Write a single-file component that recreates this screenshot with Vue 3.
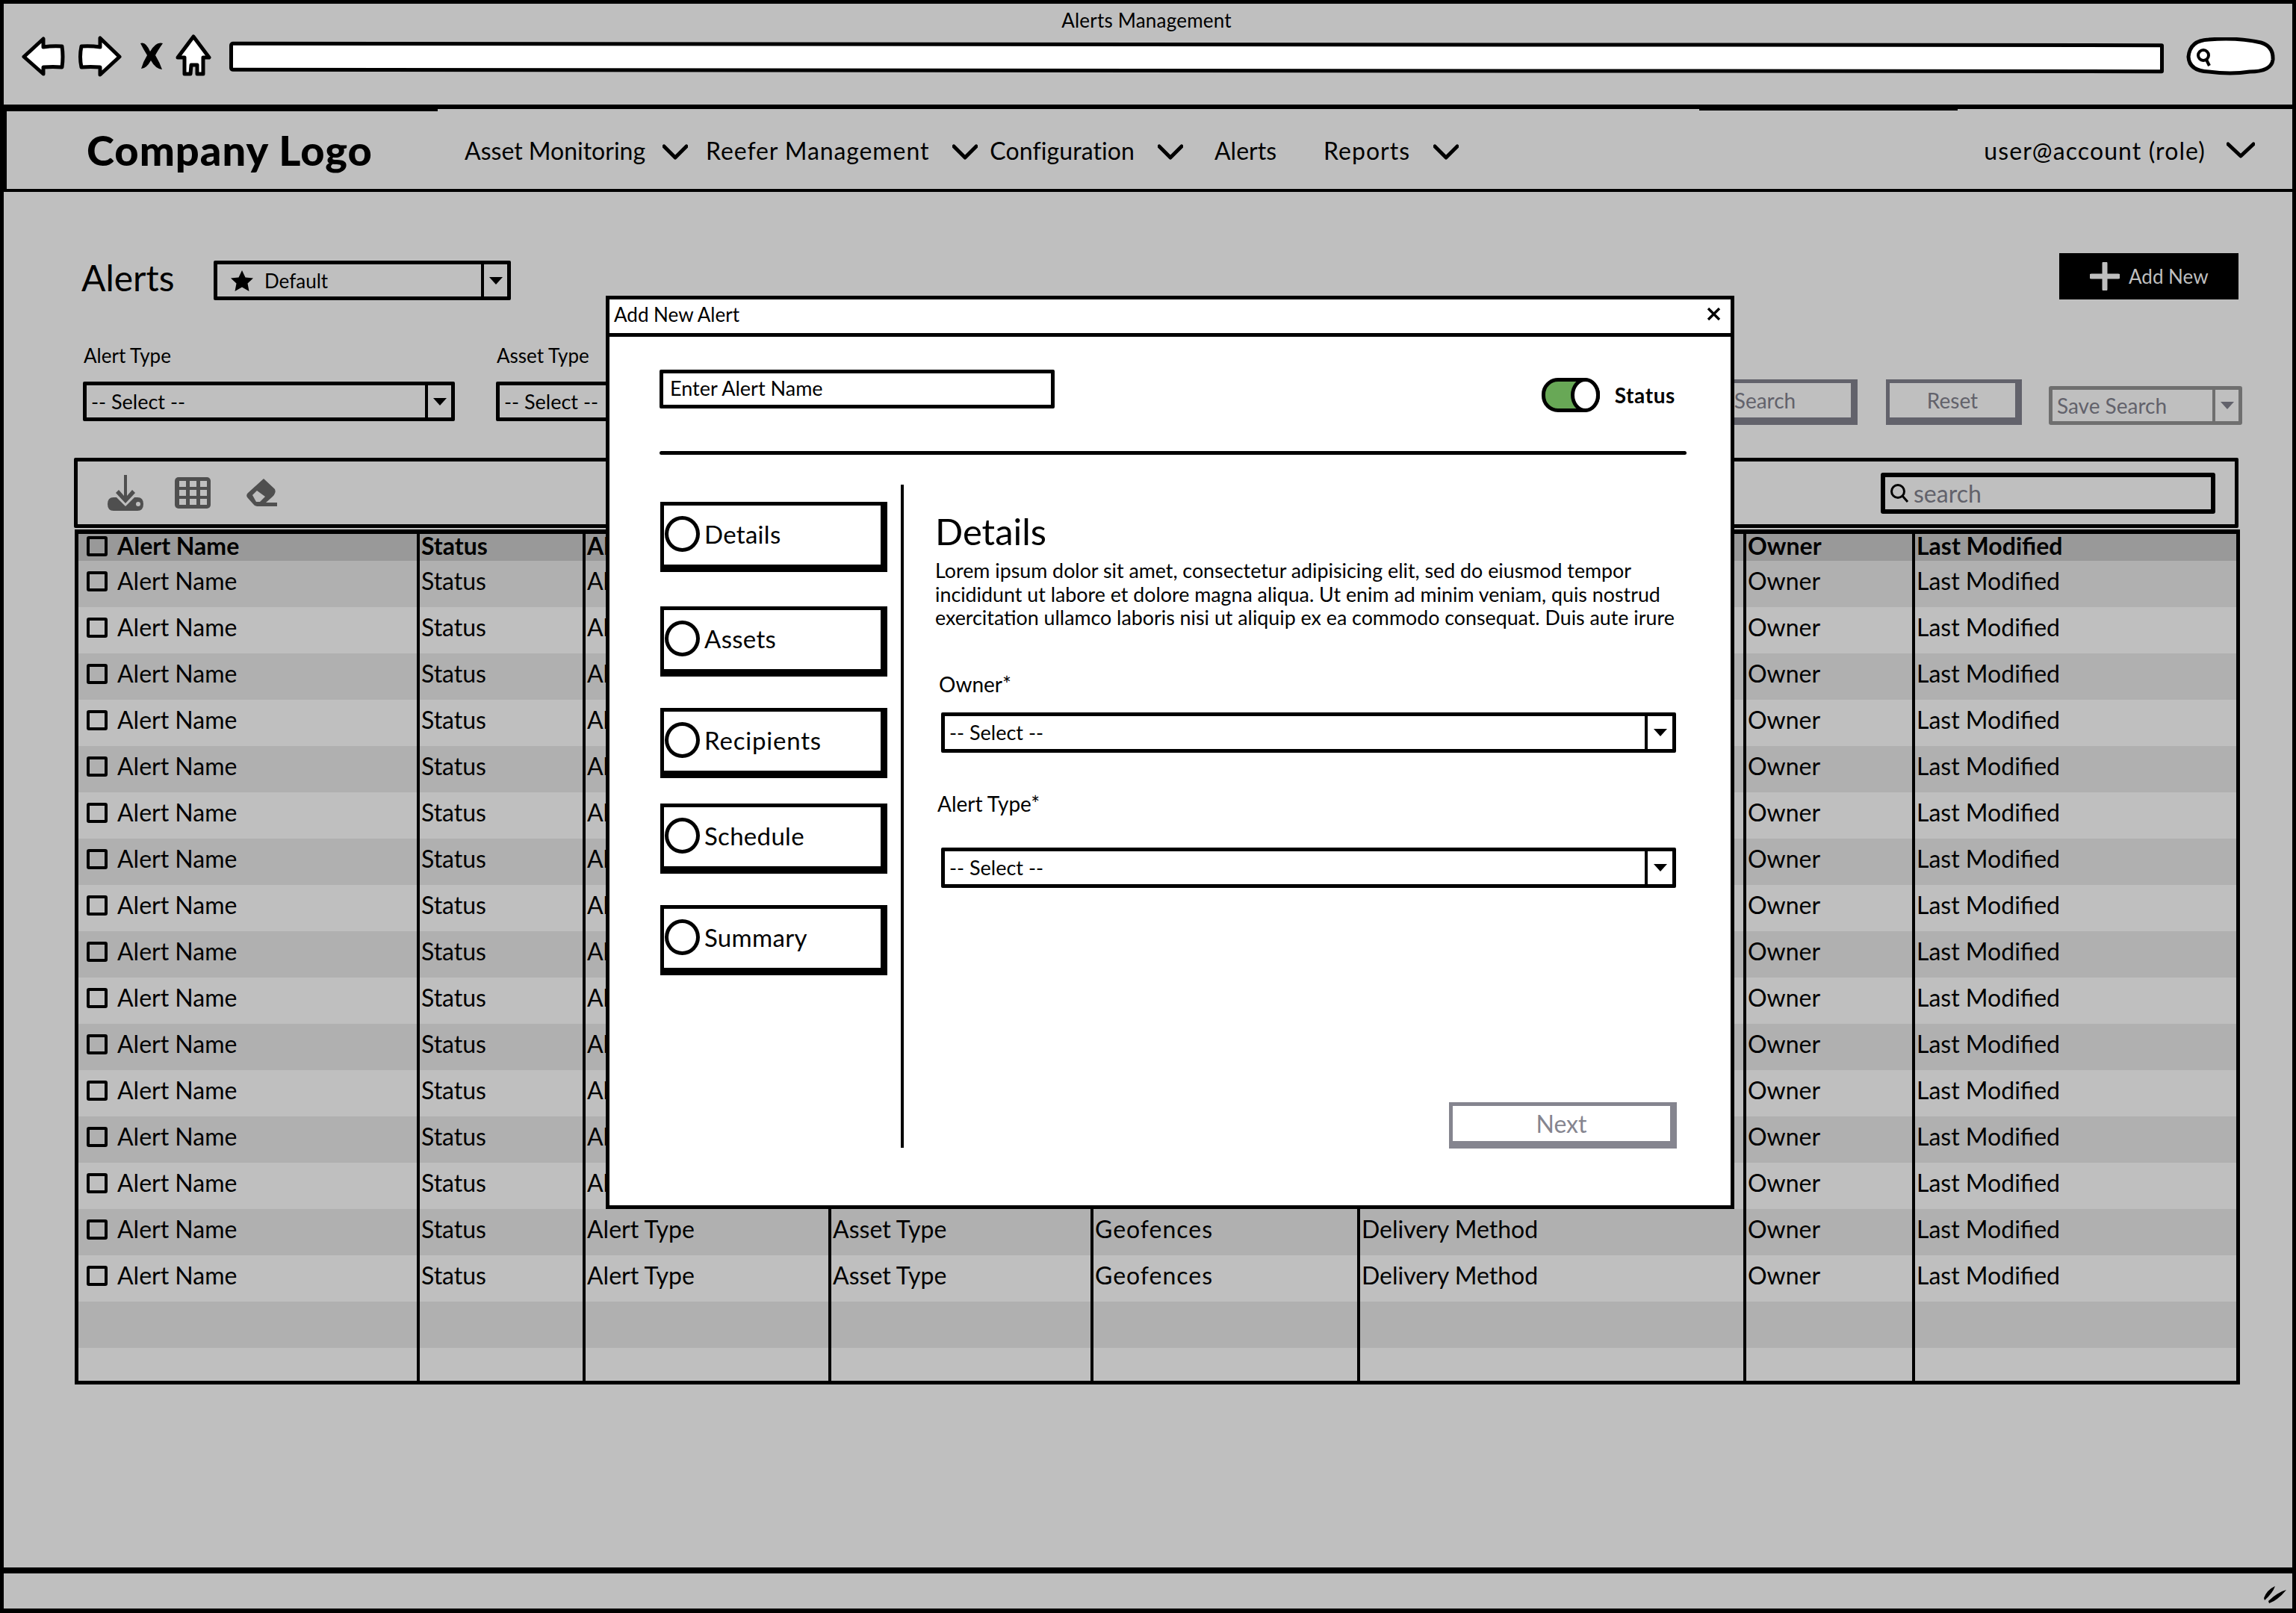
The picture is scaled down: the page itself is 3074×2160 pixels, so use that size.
<template>
  <div class="frame">
    <!-- fake browser bar -->
    <header class="chrome">
      <div class="chrome-title">Alerts Management</div>
      <div class="chrome-row">
        <svg class="ic-back" width="59" height="53" viewBox="0 0 59 53"><path d="M3 27 L29 3 L29 14 Q42 12 54 13 Q56 27 54 41 Q42 40 29 41 L29 50 Z" /></svg>
        <svg class="ic-fwd" width="59" height="55" viewBox="0 0 59 55"><path d="M56 28 L30 3 L30 15 Q17 13 5 14 Q2 28 5 42 Q17 41 30 42 L30 52 Z" /></svg>
        <svg class="ic-x" width="32" height="38" viewBox="0 0 32 38"><path d="M1 2 Q8 -1 14 13 Q22 -1 31 2 Q24 12 21 18 Q27 28 30 37 Q21 36 15 25 Q9 36 2 36 Q5 26 10 18 Q5 10 1 2 Z" fill="#000" /></svg>
        <svg class="ic-home" width="48" height="56" viewBox="0 0 48 56"><path d="M24 3 L45 31 L37 31 L37 53 L29 53 L29 41 L21 41 L20 53 L12 53 L12 31 L3 31 Z" /></svg>
        <div class="address"></div>
        <svg class="ic-pill" width="120" height="51" viewBox="0 0 120 51"><path d="M3 26 Q5 4 30 3 Q70 0 100 7 Q117 12 116 30 Q114 46 85 46 Q60 50 30 46 Q4 45 3 26 Z" /><circle cx="23" cy="24" r="7" fill="none" stroke="#000" stroke-width="4" /><path d="M27 30 L31 38" fill="none" stroke="#000" stroke-width="4" /></svg>
      </div>
    </header>

    <nav class="topnav">
      <div class="logo">Company Logo</div>
      <div class="menu">
        <div v-for="item in menu" :key="item.label" class="menu-item">
          <span>{{ item.label }}</span>
          <svg v-if="item.arrow" class="chev" width="34" height="22" viewBox="0 0 34 22"><path d="M2 3 L17 18 L32 3" /></svg>
        </div>
      </div>
      <div class="account">
        <span>user@account (role)</span>
        <svg class="chev" width="38" height="23" viewBox="0 0 38 23"><path d="M2 3 L19 19 L36 3" /></svg>
      </div>
    </nav>

    <main class="content">
      <div class="title-row">
        <h1>Alerts</h1>
        <div class="select default-select">
          <svg width="30" height="28" viewBox="0 0 30 28"><path d="M15 0 L19.5 9.5 L30 10.5 L22.5 17.5 L24.5 28 L15 22.5 L5.5 28 L7.5 17.5 L0 10.5 L10.5 9.5 Z" fill="#000" /></svg>
          <span class="select-text">Default</span>
          <span class="select-btn"><i></i></span>
        </div>
        <div class="add-new">
          <svg width="40" height="38" viewBox="0 0 40 38"><path d="M20 2 V36 M2 19 H38" stroke="#bfbfbf" stroke-width="7" stroke-linecap="round" fill="none" /></svg>
          <span>Add New</span>
        </div>
      </div>

      <div class="filters">
        <div class="field">
          <label>Alert Type</label>
          <div class="select"><span class="select-text">-- Select --</span><span class="select-btn"><i></i></span></div>
        </div>
        <div class="field">
          <label>Asset Type</label>
          <div class="select"><span class="select-text">-- Select --</span><span class="select-btn"><i></i></span></div>
        </div>
        <div class="filter-actions">
          <div class="btn btn-search">Search</div>
          <div class="btn btn-reset">Reset</div>
          <div class="select save-select"><span class="select-text">Save Search</span><span class="select-btn"><i></i></span></div>
        </div>
      </div>

      <div class="toolbar">
        <svg width="48" height="48" viewBox="0 0 48 48" fill="#4f4f4f"><path d="M22 0 H26 V28 L33 20 L37 24 L24 38 L11 24 L15 20 L22 28 Z" /><path d="M12 30 L24 42 L36 30 H40 Q48 30 48 39 Q48 48 40 48 H8 Q0 48 0 39 Q0 30 8 30 Z" /><circle cx="41" cy="39" r="3" fill="#bfbfbf" /></svg>
        <svg class="tool-grid" width="48" height="42" viewBox="0 0 48 42"><rect width="48" height="42" rx="5" fill="#4f4f4f" /><g fill="#bfbfbf"><rect v-for="c in gridHoles" :key="c.k" :x="c.x" :y="c.y" width="9" height="8" /></g></svg>
        <svg class="tool-eraser" width="44" height="38" viewBox="0 0 44 38"><path d="M24 0 L39 14 Q41 19 36 24 L27 32 H42 V37 H15 Q12 37 10 34 L2 25 Q0 22 3 19 Z" fill="#4f4f4f" /><path d="M9 22 L15 16 L26 24 L19 31 H14 Z" fill="#bfbfbf" /></svg>
        <div class="table-search">
          <svg width="26" height="26" viewBox="0 0 26 26"><circle cx="11" cy="11" r="8.5" fill="none" stroke="#000" stroke-width="3" /><path d="M17 17 L24 25" stroke="#000" stroke-width="3" /></svg>
          <span>search</span>
        </div>
      </div>

      <div class="table">
        <div class="tr th">
          <div v-for="(h, i) in columns" :key="h" class="td">
            <span v-if="i === 0" class="check"></span>{{ h }}
          </div>
        </div>
        <div v-for="n in 16" :key="n" class="tr">
          <div v-for="(h, i) in columns" :key="h" class="td">
            <span v-if="i === 0" class="check"></span>{{ h }}
          </div>
        </div>
        <div class="tr">
          <div v-for="h in columns" :key="h" class="td"></div>
        </div>
        <div class="tr tr-last">
          <div v-for="h in columns" :key="h" class="td"></div>
        </div>
      </div>
    </main>

    <footer class="statusbar">
      <svg width="32" height="25" viewBox="0 0 32 25"><path d="M1 17 Q5 6 16 1 Q13 10 2 20 Z M8 24 Q20 20 31 6 Q19 9 7 21 Z" fill="#000" /></svg>
    </footer>

    <!-- modal dialog -->
    <section class="modal">
      <div class="modal-head">
        <span>Add New Alert</span>
        <svg width="19" height="17" viewBox="0 0 19 17"><path d="M2 1 L17 16 M17 1 L2 16" stroke="#000" stroke-width="3.4" /></svg>
      </div>
      <div class="modal-body">
        <div class="name-row">
          <div class="name-input">Enter Alert Name</div>
          <div class="status-toggle">
            <span class="toggle"><i></i></span>
            <b>Status</b>
          </div>
        </div>
        <div class="rule"></div>
        <div class="wizard">
          <div class="steps">
            <div v-for="s in steps" :key="s" class="step">
              <span class="dot"></span>
              <span>{{ s }}</span>
            </div>
          </div>
          <div class="panel">
            <h2>Details</h2>
            <p>Lorem ipsum dolor sit amet, consectetur adipisicing elit, sed do eiusmod tempor<br />incididunt ut labore et dolore magna aliqua. Ut enim ad minim veniam, quis nostrud<br />exercitation ullamco laboris nisi ut aliquip ex ea commodo consequat. Duis aute irure</p>
            <label class="lbl-owner">Owner*</label>
            <div class="select wide"><span class="select-text">-- Select --</span><span class="select-btn"><i></i></span></div>
            <label class="lbl-type">Alert Type*</label>
            <div class="select wide"><span class="select-text">-- Select --</span><span class="select-btn"><i></i></span></div>
            <div class="btn btn-next">Next</div>
          </div>
        </div>
      </div>
    </section>
  </div>
</template>

<script setup>
const menu = [
  { label: "Asset Monitoring", arrow: true },
  { label: "Reefer Management", arrow: true },
  { label: "Configuration", arrow: true },
  { label: "Alerts", arrow: false },
  { label: "Reports", arrow: true },
];

const columns = ["Alert Name", "Status", "Alert Type", "Asset Type", "Geofences", "Delivery Method", "Owner", "Last Modified"];

const steps = ["Details", "Assets", "Recipients", "Schedule", "Summary"];

const gridHoles = [];
for (let r = 0; r < 3; r++) {
  for (let c = 0; c < 3; c++) {
    gridHoles.push({ k: r + "-" + c, x: 6 + c * 14, y: 5 + r * 12 });
  }
}
</script>

<style>
html, body { margin: 0; background: #bfbfbf; }
</style>

<style scoped>
.frame {
  position: relative;
  box-sizing: border-box;
  width: 3074px;
  height: 2160px;
  display: flex;
  flex-direction: column;
  background: #bfbfbf;
  border: 5px solid #000;
  border-bottom-width: 6px;
  font-family: Lato, "Liberation Sans", sans-serif;
  color: #000;
  overflow: hidden;
}

/* browser bar */
.chrome {
  height: 135px;
  flex: none;
  box-sizing: border-box;
}
.chrome-title {
  text-align: center;
  font-size: 26px;
  line-height: 34px;
  padding-top: 5px;
  padding-right: 4px;
  letter-spacing: 0.2px;
}
.chrome-row {
  display: flex;
  align-items: center;
  padding: 0 22px 0 24px;
  height: 62px;
}
.chrome-row svg path { stroke-linejoin: round; }
.ic-back path, .ic-fwd path, .ic-home path, .ic-pill > path:first-child {
  fill: #fff;
  stroke: #000;
  stroke-width: 5;
}
.ic-fwd { margin-left: 16px; }
.ic-x { margin-left: 24px; }
.ic-home { margin-left: 16px; margin-top: -2px; }
.address {
  flex: 1;
  height: 40px;
  margin: 4px 30px 0 24px;
  background: #fff;
  border: 5px solid #000;
  border-radius: 5px 3px 3px 5px;
  box-sizing: border-box;
  transform: rotate(0.05deg);
}

/* main navigation */
.topnav {
  position: relative;
  flex: none;
  height: 117px;
  box-sizing: border-box;
  display: flex;
  align-items: center;
  border-top: 6px solid #000;
  border-bottom: 4px solid #000;
  border-left: 4px solid #000;
  padding: 0 46px 0 107px;
}
/* the hand drawn top line gets thicker in two places */
.topnav::before,
.topnav::after {
  content: "";
  position: absolute;
  top: 0;
  height: 3px;
  background: #000;
}
.topnav::before { left: 0; width: 577px; }
.topnav::after { left: 2266px; width: 346px; height: 2px; }
.logo {
  font-size: 56px;
  font-weight: 900;
  letter-spacing: 1px;
  width: 506px;
  flex: none;
  padding-top: 2px;
}
.menu {
  display: flex;
  align-items: center;
  font-size: 32px;
  padding-top: 4px;
}
.menu-item {
  display: flex;
  align-items: center;
  gap: 23px;
  margin-right: 24px;
}
.menu-item .chev { margin-top: 4px; }
.menu-item:nth-child(2) {
  letter-spacing: 0.9px;
  gap: 31px;
  margin-right: 16px;
}
.menu-item:nth-child(3) {
  letter-spacing: 0.1px;
  gap: 31px;
  margin-right: 42px;
}
.menu-item:nth-child(4) { margin-right: 63px; }
.menu-item:nth-child(5) {
  letter-spacing: 1px;
  gap: 31px;
}
.chev path {
  fill: none;
  stroke: #000;
  stroke-width: 5;
  stroke-linecap: round;
  stroke-linejoin: round;
}
.account {
  margin-left: auto;
  display: flex;
  align-items: center;
  gap: 28px;
  font-size: 32px;
  letter-spacing: 1.1px;
  padding-top: 4px;
  margin-right: 4px;
}

/* page body */
.content {
  flex: 1;
  min-height: 0;
  display: flex;
  flex-direction: column;
  padding: 92px 67px 0 94px;
  box-sizing: border-box;
}
.title-row {
  display: flex;
  align-items: flex-start;
  height: 62px;
  margin-left: 12px;
}
.title-row h1 {
  margin: -3px 0 0 -2px;
  font-size: 48px;
  font-weight: 400;
  line-height: 52px;
  width: 177px;
}
.select {
  box-sizing: border-box;
  display: flex;
  align-items: center;
  width: 498px;
  height: 53px;
  border: 5px solid #000;
  border-radius: 2px;
  font-size: 27px;
  padding-left: 6px;
}
.select-text { flex: 1; white-space: nowrap; }
.select-btn {
  width: 31px;
  height: 100%;
  border-left: 4px solid #000;
  display: flex;
  align-items: center;
  justify-content: center;
  flex: none;
}
.select-btn i {
  width: 0;
  height: 0;
  border-left: 9px solid transparent;
  border-right: 9px solid transparent;
  border-top: 10px solid #000;
}
.default-select {
  width: 398px;
  padding-left: 18px;
  gap: 15px;
  font-size: 26px;
}
.add-new {
  margin-left: auto;
  margin-right: 5px;
  margin-top: -10px;
  width: 240px;
  height: 62px;
  background: #000;
  color: #bfbfbf;
  display: flex;
  align-items: center;
  gap: 12px;
  padding-left: 41px;
  box-sizing: border-box;
  font-size: 26px;
}

.filters {
  display: flex;
  align-items: flex-start;
  height: 150px;
  margin-top: 52px;
  margin-left: 12px;
}
.field { width: 553px; flex: none; }
.field label {
  display: block;
  font-size: 26px;
  line-height: 26px;
  height: 48px;
  margin-left: 1px;
}
.filter-actions {
  margin-left: auto;
  display: flex;
  align-items: flex-end;
  margin-top: 45px;
  gap: 38px;
}
.btn {
  box-sizing: border-box;
  display: flex;
  align-items: center;
  justify-content: center;
  border: 5px solid #62626b;
  border-right-width: 9px;
  border-bottom-width: 10px;
  color: #62626b;
  font-size: 28px;
  height: 61px;
}
.btn-search { width: 244px; }
.btn-reset { width: 182px; }
.save-select {
  width: 259px;
  height: 52px;
  margin-left: -2px;
  border-color: #6f6f6f;
  color: #62626b;
  font-size: 28px;
  padding-left: 6px;
  border-radius: 3px;
}
.save-select .select-btn { border-left-color: #6f6f6f; }
.save-select .select-btn i { border-top-color: #62626b; }

.toolbar {
  flex: none;
  box-sizing: border-box;
  height: 94px;
  width: 2898px;
  display: flex;
  align-items: center;
  padding-left: 40px;
  border: 5px solid #000;
  border-radius: 2px;
}
.tool-grid { margin-left: 42px; }
.tool-eraser { margin-left: 47px; }
.table-search {
  margin-left: auto;
  margin-right: 26px;
  width: 448px;
  height: 55px;
  box-sizing: border-box;
  border: 6px solid #000;
  border-radius: 3px;
  display: flex;
  align-items: center;
  gap: 6px;
  padding-left: 6px;
  font-size: 32px;
  color: #62626b;
}

.table {
  flex: none;
  box-sizing: border-box;
  width: 2899px;
  margin-top: 2px;
  margin-left: 1px;
  border: 5px solid #000;
  border-top-width: 6px;
}
.tr {
  display: grid;
  grid-template-columns: 453px 222px 329px 351px 357px 517px 226px 1fr;
  height: 62px;
  font-size: 32px;
  line-height: 30px;
}
.tr:nth-child(even) { background: #b0b0b0; }
.tr-last { height: 44px; }
.th {
  height: 36px;
  background: #999;
  font-weight: 700;
}
.td {
  display: flex;
  align-items: center;
  border-left: 4px solid #000;
  padding: 0 0 8px 2px;
  white-space: nowrap;
}
.th .td { padding-bottom: 4px; }
.td:first-child {
  border-left: 0;
  padding-left: 11px;
}
.td:nth-child(5) { letter-spacing: 1px; }
.check {
  width: 28px;
  height: 27px;
  box-sizing: border-box;
  border: 4px solid #000;
  border-radius: 3px;
  margin-right: 13px;
  flex: none;
}

.statusbar {
  flex: none;
  height: 55px;
  border-top: 8px solid #000;
  display: flex;
  align-items: center;
  justify-content: flex-end;
  padding: 9px 7px 0 0;
  box-sizing: border-box;
}

/* modal */
.modal {
  position: absolute;
  left: 806px;
  top: 391px;
  width: 1511px;
  height: 1223px;
  box-sizing: border-box;
  background: #fff;
  border: 5px solid #000;
  display: flex;
  flex-direction: column;
}
.modal-head {
  flex: none;
  height: 50px;
  box-sizing: border-box;
  border-bottom: 5px solid #000;
  display: flex;
  align-items: center;
  justify-content: space-between;
  padding: 0 13px 6px 6px;
  font-size: 26px;
}
.modal-body {
  flex: 1;
  display: flex;
  flex-direction: column;
  padding: 44px 59px 0 67px;
}
.name-row {
  display: flex;
  align-items: flex-start;
  justify-content: space-between;
  height: 109px;
}
.name-input {
  box-sizing: border-box;
  width: 529px;
  height: 52px;
  border: 5px solid #000;
  border-radius: 2px;
  display: flex;
  align-items: center;
  padding-left: 9px;
  padding-bottom: 4px;
  font-size: 27px;
}
.status-toggle {
  display: flex;
  align-items: center;
  gap: 20px;
  margin-top: 11px;
  margin-right: 15px;
  font-size: 28px;
  letter-spacing: 0.6px;
}
.toggle {
  position: relative;
  display: block;
  box-sizing: border-box;
  width: 78px;
  height: 46px;
  margin-left: 2px;
  background: #68a856;
  border: 5px solid #000;
  border-radius: 22px;
}
.toggle i {
  position: absolute;
  right: -5px;
  top: -5px;
  box-sizing: border-box;
  width: 39px;
  height: 46px;
  background: #fff;
  border: 5px solid #000;
  border-radius: 50%;
}
.rule {
  height: 5px;
  background: #000;
  border-radius: 3px;
}
.wizard {
  display: flex;
  margin-top: 40px;
}
.steps {
  flex: none;
  width: 326px;
  height: 888px;
  box-sizing: border-box;
  padding-top: 23px;
  border-right: 4px solid #000;
  margin-left: 1px;
}
.step {
  box-sizing: border-box;
  width: 304px;
  height: 94px;
  display: flex;
  align-items: center;
  gap: 6px;
  padding: 0 0 4px 1px;
  border: 5px solid #000;
  border-right-width: 9px;
  border-bottom-width: 10px;
  font-size: 33px;
  letter-spacing: 0.3px;
}
.step:nth-child(2) { margin-top: 46px; }
.step:nth-child(3) { margin-top: 42px; letter-spacing: 0.8px; }
.step:nth-child(4) { margin-top: 34px; }
.step:nth-child(5) { margin-top: 42px; }
.dot {
  width: 47px;
  height: 48px;
  box-sizing: border-box;
  border: 5px solid #000;
  border-radius: 50%;
  flex: none;
}
.panel {
  flex: 1;
  position: relative;
  padding-left: 42px;
}
.panel h2 {
  margin: 34px 0 0;
  font-size: 49px;
  font-weight: 400;
  line-height: 56px;
}
.panel p {
  margin: 10px 0 0;
  font-size: 26.8px;
  line-height: 31.5px;
  white-space: nowrap;
}
.panel label {
  display: block;
  font-size: 28px;
  line-height: 30px;
}
.lbl-owner { margin: 57px 0 0 5px; }
.lbl-type { margin: 53px 0 0 3px; }
.wide {
  width: 984px;
  margin: 23px 0 0 8px;
  height: 54px;
}
.wide .select-btn { width: 33px; }
.lbl-type + .wide { margin-top: 44px; }
.btn-next {
  position: absolute;
  left: 730px;
  top: 827px;
  width: 305px;
  height: 62px;
  border-color: #85858f;
  color: #85858f;
  font-size: 32px;
}
</style>
